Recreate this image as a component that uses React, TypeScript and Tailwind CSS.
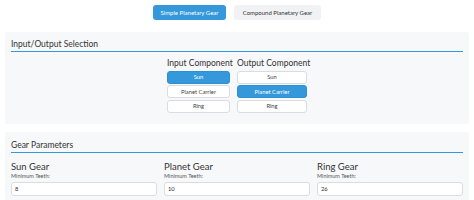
import { useState } from 'react'

const font = { fontFamily: 'Lato, "Liberation Sans", sans-serif' }

function Choice({ label, active, onClick }: { label: string; active: boolean; onClick: () => void }) {
  return (
    <button
      onClick={onClick}
      className={
        active
          ? 'h-[13px] w-full rounded-[3px] border border-[#2f8fd6] bg-[#3498db] text-[5.8px] leading-none text-white'
          : 'h-[13px] w-full rounded-[3px] border border-[#d9dde2] bg-white text-[5.8px] leading-none text-[#444]'
      }
    >
      {label}
    </button>
  )
}

const parts = ['Sun', 'Planet Carrier', 'Ring']

export default function App() {
  const [mode, setMode] = useState('simple')
  const [input, setInput] = useState('Sun')
  const [output, setOutput] = useState('Planet Carrier')

  return (
    <div className="h-[200px] w-[474px] overflow-hidden bg-white text-[#333]" style={font}>
      <div className="flex justify-center gap-[8px] pt-[5px]">
        <button
          onClick={() => setMode('simple')}
          className={
            mode === 'simple'
              ? 'h-[15px] w-[73px] rounded-[3px] bg-[#3498db] text-[6px] text-white'
              : 'h-[15px] w-[73px] rounded-[3px] bg-[#f1f2f4] text-[6px] text-[#333]'
          }
        >
          Simple Planetary Gear
        </button>
        <button
          onClick={() => setMode('compound')}
          className={
            mode === 'compound'
              ? 'h-[15px] w-[87px] rounded-[3px] bg-[#3498db] text-[6px] text-white'
              : 'h-[15px] w-[87px] rounded-[3px] bg-[#f1f2f4] text-[6px] text-[#333]'
          }
        >
          Compound Planetary Gear
        </button>
      </div>

      <div className="mx-[5px] mt-[12px] rounded-[3px] bg-[#f7f8fa] px-[6px] pt-[7px] pb-[11px]">
        <h2 className="border-b border-[#3498db] pb-[1px] text-[8.5px] leading-[11px]">Input/Output Selection</h2>
        <div className="mt-[6px] flex justify-center gap-[7px]">
          <div className="flex w-[63px] flex-col gap-[1.5px]">
            <div className="text-center text-[8.5px] leading-[11px] whitespace-nowrap">Input Component</div>
            {parts.map((p) => (
              <Choice key={p} label={p} active={input === p} onClick={() => setInput(p)} />
            ))}
          </div>
          <div className="flex w-[70px] flex-col gap-[1.5px]">
            <div className="text-center text-[8.5px] leading-[11px] whitespace-nowrap">Output Component</div>
            {parts.map((p) => (
              <Choice key={p} label={p} active={output === p} onClick={() => setOutput(p)} />
            ))}
          </div>
        </div>
      </div>

      <div className="mx-[5px] mt-[8px] rounded-[3px] bg-[#f7f8fa] px-[6px] pt-[8px] pb-[6px]">
        <h2 className="border-b border-[#3498db] pb-[1px] text-[8.5px] leading-[11px]">Gear Parameters</h2>
        <div className="mt-[9px] grid grid-cols-3 gap-[7px]">
          {[
            ['Sun Gear', '8'],
            ['Planet Gear', '10'],
            ['Ring Gear', '26'],
          ].map(([name, v]) => (
            <div key={name}>
              <div className="text-[9.5px] leading-[10px]">{name}</div>
              <div className="mt-[1px] text-[5.5px] leading-[7px] text-[#555]">Minimum Teeth:</div>
              <input
                defaultValue={v}
                className="mt-[2px] block h-[14px] w-full rounded-[3px] border border-[#d9dde2] bg-white px-[3px] text-[5.8px] text-[#333] outline-none"
              />
            </div>
          ))}
        </div>
      </div>
    </div>
  )
}
